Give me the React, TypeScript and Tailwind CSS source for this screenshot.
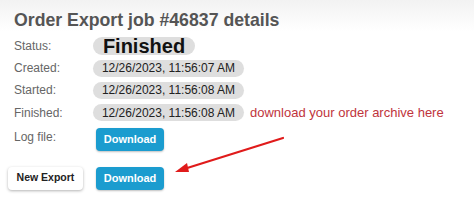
import React from 'react';

const rows = [
  { label: 'Created:', value: '12/26/2023, 11:56:07 AM' },
  { label: 'Started:', value: '12/26/2023, 11:56:08 AM' },
  { label: 'Finished:', value: '12/26/2023, 11:56:08 AM' },
];

const DownloadButton: React.FC = () => (
  <button className="h-[23px] w-[68px] rounded-[4px] bg-[#1b9ccf] text-[11px] font-bold text-white shadow-[0_1px_2px_rgba(0,0,0,0.25)]">
    Download
  </button>
);

export default function App() {
  return (
    <div className="relative h-[205px] w-[474px] overflow-hidden bg-white font-['Liberation_Sans',Arial,sans-serif]">
      <div className="bg-gradient-to-b from-[#f2f2f2] to-white px-[14px] pt-[9px]">
        <h1 className="text-[17.7px] font-bold leading-[22px] text-[#555]">Order Export job #46837 details</h1>
      </div>

      <div className="flex flex-col gap-[4px] pl-[14px] pt-[6px]">
        <div className="flex items-center">
          <span className="w-[79px] text-[12px] text-[#666]">Status:</span>
          <span className="flex h-[18px] w-[102px] items-center justify-center rounded-full bg-[#dedede] text-[20px] font-bold text-[#111]">
            Finished
          </span>
        </div>
        {rows.map((row, i) => (
          <div key={row.label} className="flex items-center">
            <span className="w-[79px] text-[12px] text-[#666]">{row.label}</span>
            <span className="flex h-[17px] w-[151px] items-center justify-center rounded-full bg-[#dedede] text-[12px] text-[#222]">
              {row.value}
            </span>
            {i === 2 && (
              <span className="ml-[6px] text-[13px] text-[#c0343c]">download your order archive here</span>
            )}
          </div>
        ))}
      </div>

      <div className="mt-[5px] flex items-start pl-[14px]">
        <span className="w-[82px] text-[12px] text-[#666]">Log file:</span>
        <DownloadButton />
      </div>

      <div className="mt-[16px] flex items-center gap-[13px] pl-[8px]">
        <button className="h-[23px] w-[75px] rounded-[4px] bg-white text-[10.5px] font-bold text-[#222] shadow-[0_1px_3px_rgba(0,0,0,0.3)]">
          New Export
        </button>
        <DownloadButton />
      </div>

      {/* annotation arrow */}
      <svg className="absolute left-0 top-0" width="474" height="205" viewBox="0 0 474 205">
        <line x1="283" y1="138" x2="184" y2="169" stroke="#e01b1b" strokeWidth="2.2" strokeLinecap="round" />
        <polygon points="175,172 187,163 189,172" fill="#e01b1b" />
      </svg>
    </div>
  );
}
